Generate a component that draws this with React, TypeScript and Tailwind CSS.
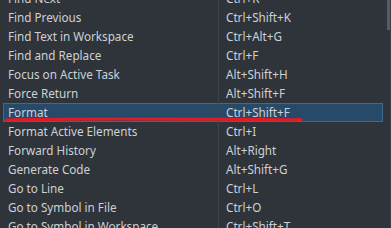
import React from "react";

const rows: [string, string][] = [
  ["Find Next", "Ctrl+K"],
  ["Find Previous", "Ctrl+Shift+K"],
  ["Find Text in Workspace", "Ctrl+Alt+G"],
  ["Find and Replace", "Ctrl+F"],
  ["Focus on Active Task", "Alt+Shift+H"],
  ["Force Return", "Alt+Shift+F"],
  ["Format", "Ctrl+Shift+F"],
  ["Format Active Elements", "Ctrl+I"],
  ["Forward History", "Alt+Right"],
  ["Generate Code", "Alt+Shift+G"],
  ["Go to Line", "Ctrl+L"],
  ["Go to Symbol in File", "Ctrl+O"],
  ["Go to Symbol in Workspace", "Ctrl+Shift+T"],
];

export default function App() {
  return (
    <div
      className="relative w-[391px] h-[228px] overflow-hidden bg-[#2f343a] text-[#cdd1d5] text-[11.7px]"
      style={{ fontFamily: '"Noto Sans", "Open Sans", sans-serif' }}
    >
      <div className="flex h-full">
        <div className="relative flex-1 pl-[3px] pr-[4px]">
          <div className="absolute left-[218px] top-0 bottom-0 w-px bg-[#3e444b]" />
          <div className="mt-[-11px] flex flex-col">
            {rows.map(([name, key]) => {
              const sel = name === "Format";
              return (
                <div
                  key={name}
                  className={
                    "flex h-[19px] items-center leading-none " +
                    (sel ? "bg-[#274a69] outline outline-1 outline-[#3a6a92] -outline-offset-1" : "")
                  }
                >
                  <div className="w-[215px] pl-[5px] whitespace-nowrap">{name}</div>
                  <div className="pl-[8px] whitespace-nowrap">{key}</div>
                </div>
              );
            })}
          </div>
        </div>
        <div className="relative w-[4px] h-full bg-[#2f343a]">
          <div className="absolute right-0 top-0 bottom-0 w-px bg-[#3b4046]" />
          <div className="absolute left-0 top-0 w-[3px] h-[30px] bg-[#565c63]" />
        </div>
      </div>
      <svg className="absolute left-0 top-0" width="391" height="228">
        <path
          d="M6 120 C 60 118.5, 150 118.8, 220 119.3 S 290 120, 301 119.5"
          stroke="#e01b24"
          strokeWidth="3"
          fill="none"
          strokeLinecap="round"
        />
      </svg>
    </div>
  );
}
